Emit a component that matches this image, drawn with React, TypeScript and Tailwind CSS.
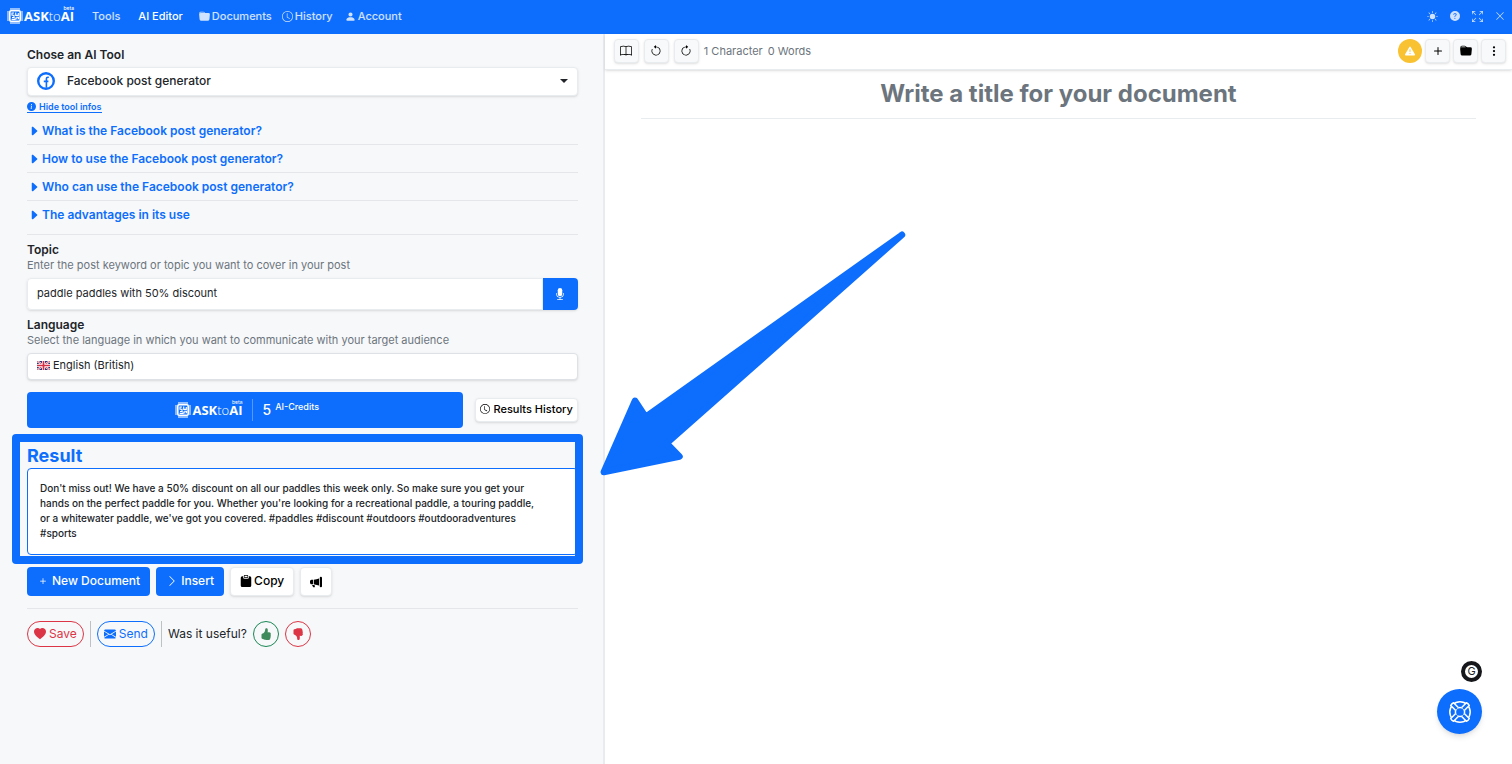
import React from "react";
import {
  BsArrowClockwise,
  BsArrowCounterclockwise,
  BsArrowsFullscreen,
  BsBook,
  BsBrightnessHighFill,
  BsCaretRightFill,
  BsChevronRight,
  BsClipboardFill,
  BsClock,
  BsEnvelopeFill,
  BsExclamationTriangleFill,
  BsFolderFill,
  BsHandThumbsDownFill,
  BsHandThumbsUpFill,
  BsHeartFill,
  BsInfoCircleFill,
  BsMegaphoneFill,
  BsMicFill,
  BsPersonFill,
  BsPlus,
  BsQuestionCircleFill,
  BsThreeDotsVertical,
  BsXLg,
} from "react-icons/bs";

const questions = [
  "What is the Facebook post generator?",
  "How to use the Facebook post generator?",
  "Who can use the Facebook post generator?",
  "The advantages in its use",
];

function Chip() {
  const pins = [4, 6, 8, 10, 12];
  return (
    <svg viewBox="0 0 16 16" className="size-4 shrink-0" fill="none" stroke="currentColor" aria-hidden="true">
      <rect x="2.8" y="2.8" width="10.4" height="10.4" rx="1.2" strokeWidth="1.6" />
      {pins.map((p) => (
        <path key={p} d={`M${p} 0v2.4M${p} 13.6v2.4M0 ${p}h2.4M13.6 ${p}h2.4`} strokeWidth="1.1" />
      ))}
      <path d="M7 5H5v2.2h2v2.3H5M8.7 4.6v2.8h2.6V5M4.6 11.4h3.6V9.6M9.8 11.4V9.3h1.8v2" strokeWidth="1.1" />
    </svg>
  );
}

function Logo() {
  return (
    <span className="relative flex items-center gap-px text-white">
      <Chip />
      <span className="font-['Open_Sans',sans-serif] text-[13px] leading-[10px]">
        <b>ASK</b>
        <span className="font-light">to</span>
        <b>AI</b>
      </span>
      <span className="absolute right-0 bottom-[13px] text-[5px] leading-[5px]">beta</span>
    </span>
  );
}

function FacebookBadge() {
  return (
    <svg viewBox="0 0 18 18" className="size-[18px]" fill="none" stroke="#0d6efd" aria-hidden="true">
      <circle cx="9" cy="9" r="7.8" fill="#fff" strokeWidth="2.4" />
      <path d="M11.8 5.2h-.9c-1 0-1.5.6-1.5 1.6v9M6.8 9.4h4.6" strokeWidth="1.6" />
    </svg>
  );
}

function LifeBuoy() {
  return (
    <svg viewBox="0 0 24 24" className="size-6" fill="none" stroke="currentColor" strokeWidth="1.5" aria-hidden="true">
      <circle cx="12" cy="12" r="10.2" />
      <circle cx="12" cy="12" r="4.6" />
      {[45, 135, 225, 315].map((angle) => (
        <g key={angle} transform={`rotate(${angle} 12 12)`}>
          <path d="M10 7.6V.9q2-.8 4 0v6.7" fill="#0d6efd" strokeLinejoin="round" />
        </g>
      ))}
    </svg>
  );
}

function ToolButton({ label, children }: { label: string; children: React.ReactNode }) {
  return (
    <button
      aria-label={label}
      className="flex h-6 w-[25px] items-center justify-center rounded border border-[#e9ecef] bg-[#f8f9fa] text-xs text-black shadow-sm"
    >
      {children}
    </button>
  );
}

function Header() {
  return (
    <header className="flex h-[34px] items-center justify-between bg-[#0d6efd] px-[7px] pb-0.5 text-[11px] font-medium text-white/80">
      <div className="flex items-center">
        <a href="#home" aria-label="ASKtoAI">
          <Logo />
        </a>
        <nav className="ml-[18px] flex items-center">
          <a href="#tools">Tools</a>
          <a href="#editor" className="ml-[18px] text-white">AI Editor</a>
          <a href="#documents" className="ml-4 flex items-center gap-0.5"><BsFolderFill className="size-[11px]" />Documents</a>
          <a href="#history" className="ml-[10px] flex items-center gap-0.5"><BsClock className="size-[11px]" />History</a>
          <a href="#account" className="ml-3 flex items-center gap-0.5"><BsPersonFill className="size-[11px]" />Account</a>
        </nav>
      </div>
      <div className="flex items-center gap-3">
        <button aria-label="Brightness"><BsBrightnessHighFill className="size-[11px]" /></button>
        <button aria-label="Help"><BsQuestionCircleFill className="size-[10px]" /></button>
        <button aria-label="Fullscreen"><BsArrowsFullscreen className="size-[11px]" /></button>
        <button aria-label="Close"><BsXLg className="size-[10px]" /></button>
      </div>
    </header>
  );
}

function Flag() {
  return (
    <svg viewBox="0 0 26 18" className="pointer-events-none absolute top-2 left-[10px] h-[9px] w-[13px]" aria-hidden="true">
      <rect width="26" height="18" rx="1" fill="#29337a" />
      <path d="M0 0l26 18M26 0L0 18" stroke="#fff" strokeWidth="4" />
      <path d="M0 0l26 18M26 0L0 18" stroke="#d32f45" strokeWidth="1.6" />
      <path d="M13 0v18M0 9h26" stroke="#fff" strokeWidth="6" />
      <path d="M13 0v18M0 9h26" stroke="#d32f45" strokeWidth="3.4" />
    </svg>
  );
}

function ToolPanel() {
  return (
    <section className="w-2/5 border-r-2 border-[#e9ecef] bg-[#f7f8fa] pt-3 pr-[25px] pl-[27px]">
      <h2 className="text-xs leading-[18px] font-semibold">Chose an AI Tool</h2>
      <button className="mt-[3px] flex h-[29px] w-full items-center rounded border border-[#e9ecef] bg-white px-[9px] pb-0.5 text-xs font-medium shadow-sm">
        <FacebookBadge />
        <span className="ml-3">Facebook post generator</span>
        <span className="ml-auto border-x-4 border-t-4 border-x-transparent border-t-[#212529]" />
      </button>
      <a href="#infos" className="mt-[5px] flex h-3 w-fit items-center gap-[3px] border-b border-[#0d6efd] text-[9px] font-semibold text-[#0d6efd]">
        <BsInfoCircleFill className="size-[9px]" />
        Hide tool infos
      </a>
      <ul className="mt-1 border-b border-[#e4e6e9] pb-1.5">
        {questions.map((q) => (
          <li key={q} className="border-b border-[#e4e6e9] last:border-b-0">
            <button className="flex h-[27px] items-center gap-0.5 pl-px text-xs font-semibold text-[#0d6efd]">
              <BsCaretRightFill className="size-3" />
              {q}
            </button>
          </li>
        ))}
      </ul>

      <label htmlFor="topic" className="mt-[7px] block text-xs leading-4 font-semibold">Topic</label>
      <p className="text-[11px] leading-[15px] text-[#6c757d]">Enter the post keyword or topic you want to cover in your post</p>
      <div className="mt-[5px] flex h-8 rounded shadow-sm">
        <input
          id="topic"
          defaultValue="paddle paddles with 50% discount"
          className="min-w-0 flex-1 rounded-l border border-[#e9ecef] bg-white px-[9px] pb-0.5 text-[11px] outline-none"
        />
        <button aria-label="Dictate" className="flex w-[35px] items-center justify-center rounded-r bg-[#0d6efd] text-white">
          <BsMicFill className="size-3" />
        </button>
      </div>

      <label htmlFor="language" className="mt-[7px] block text-xs leading-4 font-semibold">Language</label>
      <p className="text-[11px] leading-[15px] text-[#6c757d]">Select the language in which you want to communicate with your target audience</p>
      <div className="relative mt-[5px]">
        <select
          id="language"
          className="block h-[27px] w-full appearance-none rounded border border-[#dee2e6] bg-white pb-0.5 pl-[25px] text-[11px] shadow-sm"
        >
          <option>English (British)</option>
        </select>
        <Flag />
      </div>

      <div className="mt-3 flex items-center gap-3">
        <button className="flex h-9 flex-1 items-center justify-center rounded bg-[#0d6efd] pl-1 text-white">
          <Logo />
          <span className="ml-[10px] h-[22px] border-l border-white/30" />
          <span className="ml-[9px] text-sm font-medium">5</span>
          <span className="mb-1.5 ml-1 text-[9px] font-medium">AI-Credits</span>
        </button>
        <button className="flex h-6 items-center gap-[3px] rounded border border-[#e9ecef] bg-white px-1 pb-0.5 text-[11px] font-medium text-black shadow-sm">
          <BsClock className="size-[10px]" />
          Results History
        </button>
      </div>

      <div className="relative mt-4">
        <h3 className="text-lg leading-6 font-bold text-[#0d6efd]">Result</h3>
        <p className="h-[87px] rounded border border-[#0d6efd] bg-white p-3 pr-9 text-[10px] leading-[15px] font-medium">
          Don't miss out! We have a 50% discount on all our paddles this week only. So make sure you get your hands on the perfect paddle for you. Whether you're looking for a recreational paddle, a touring paddle, or a whitewater paddle, we've got you covered. #paddles #discount #outdoors #outdooradventures #sports
        </p>
        <div className="pointer-events-none absolute -top-[10px] -right-[5px] -bottom-[9px] -left-[15px] rounded border-8 border-[#0d6efd]" />
      </div>

      <div className="mt-3 flex h-[29px] gap-1.5 text-xs font-medium">
        <button className="flex items-center gap-[3px] rounded bg-[#0d6efd] px-[10px] pb-0.5 text-white"><BsPlus className="size-3" />New Document</button>
        <button className="flex items-center gap-[3px] rounded bg-[#0d6efd] px-[10px] pb-0.5 text-white"><BsChevronRight className="size-3" />Insert</button>
        <button className="flex items-center gap-0.5 rounded border border-[#e9ecef] bg-white px-[9px] pb-0.5 text-black shadow-sm"><BsClipboardFill className="size-3" />Copy</button>
        <button aria-label="Share" className="flex w-8 items-center justify-center rounded border border-[#e9ecef] bg-white text-black shadow-sm"><BsMegaphoneFill className="size-3" /></button>
      </div>

      <div className="mt-3 flex items-center gap-1.5 border-t border-[#e4e6e9] pt-3 text-xs">
        <button className="flex h-[26px] items-center gap-[3px] rounded-full border border-[#dc3545] px-1.5 text-[#dc3545]"><BsHeartFill className="size-3" />Save</button>
        <span className="h-[26px] border-l border-[#bfc2c5]" />
        <button className="flex h-[26px] items-center gap-[3px] rounded-full border border-[#0d6efd] px-1.5 text-[#0d6efd]"><BsEnvelopeFill className="size-3" />Send</button>
        <span className="h-[26px] border-l border-[#bfc2c5]" />
        <span>Was it useful?</span>
        <button aria-label="Yes" className="flex size-[26px] items-center justify-center rounded-full border border-[#198754] text-[#3f8a5b]"><BsHandThumbsUpFill className="size-3" /></button>
        <button aria-label="No" className="flex size-[26px] items-center justify-center rounded-full border border-[#dc3545] text-[#dc3545]"><BsHandThumbsDownFill className="size-3" /></button>
      </div>
    </section>
  );
}

function Editor() {
  return (
    <section className="flex-1 bg-white">
      <div className="flex h-9 items-center justify-between border-b border-[#e9ecef] pr-1.5 pb-px pl-[9px] text-[11px] text-[#6c757d] shadow-sm">
        <div className="flex items-center gap-[5px]">
          <ToolButton label="Library"><BsBook /></ToolButton>
          <ToolButton label="Undo"><BsArrowCounterclockwise /></ToolButton>
          <ToolButton label="Redo"><BsArrowClockwise /></ToolButton>
          <span>1 Character</span>
          <span>0 Words</span>
        </div>
        <div className="flex items-center gap-[3px]">
          <button aria-label="Warning" className="flex size-6 items-center justify-center rounded-full bg-[#f9c232] text-white"><BsExclamationTriangleFill className="size-[10px]" /></button>
          <ToolButton label="Add"><BsPlus className="size-4" /></ToolButton>
          <ToolButton label="Open"><BsFolderFill /></ToolButton>
          <ToolButton label="More"><BsThreeDotsVertical /></ToolButton>
        </div>
      </div>
      <div className="px-9">
        <input
          aria-label="Document title"
          placeholder="Write a title for your document"
          className="h-[49px] w-full border-b border-[#e9ecef] pb-0.5 text-center text-2xl font-bold outline-none placeholder:text-[#6c757d]"
        />
      </div>
    </section>
  );
}

export default function App() {
  return (
    <div className="relative flex min-h-screen flex-col overflow-hidden font-['Inter',sans-serif] text-[#212529]">
      <Header />
      <main className="flex flex-1">
        <ToolPanel />
        <Editor />
      </main>
      <svg
        viewBox="0 0 306 246"
        className="pointer-events-none absolute top-[231px] left-[600px] w-[306px]"
        fill="#0d6efd"
        stroke="#0d6efd"
        strokeWidth="6.5"
        strokeLinejoin="round"
        aria-hidden="true"
      >
        <path d="M302 3.8L66.6 212.4L79.5 225.5L3.8 241L35 169.8L45.6 185.8Z" />
      </svg>
      <div className="absolute right-[30px] bottom-[30px] flex flex-col items-end gap-[7px]">
        <button aria-label="Grammar check" className="flex size-[21px] items-center justify-center rounded-full border-4 border-[#15171a] bg-white text-[11px]">G</button>
        <button aria-label="Support" className="flex size-[45px] items-center justify-center rounded-full bg-[#0d6efd] text-white shadow-md"><LifeBuoy /></button>
      </div>
    </div>
  );
}
